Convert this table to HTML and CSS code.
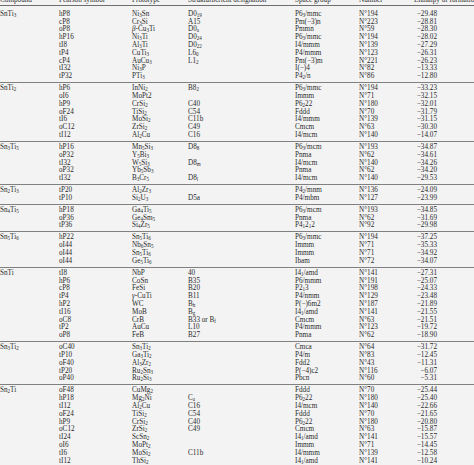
FILE: index.html
```html
<!DOCTYPE html>
<html>
<head>
<meta charset="utf-8">
<link rel="stylesheet" href="styles.css">
</head>
<body>
<div class="page">
<table class="t">
<colgroup>
<col class="c1"><col class="c2"><col class="c3"><col class="c4"><col class="c5"><col class="c6"><col class="c7">
</colgroup>
<thead>
<tr><th>Compound</th><th>Pearson symbol</th><th>Prototype</th><th>Strukturbericht designation</th><th>Space group</th><th>Number</th><th class="eh">Enthalpy of formation</th></tr>
</thead>
<tbody class="g g1">
<tr><td>SnTi<sub>3</sub></td><td>hP8</td><td>Ni<sub>3</sub>Sn</td><td>D0<sub>19</sub></td><td>P6<sub>3</sub>/mmc</td><td>N°194</td><td class="e">−29.48</td></tr>
<tr><td></td><td>cP8</td><td>Cr<sub>3</sub>Si</td><td>A15</td><td>Pm(−3)n</td><td>N°223</td><td class="e">−28.81</td></tr>
<tr><td></td><td>oP8</td><td><i>β</i>-Cu<sub>3</sub>Ti</td><td>D0<sub>a</sub></td><td>Pmmn</td><td>N°59</td><td class="e">−28.30</td></tr>
<tr><td></td><td>hP16</td><td>Ni<sub>3</sub>Ti</td><td>D0<sub>24</sub></td><td>P6<sub>3</sub>/mmc</td><td>N°194</td><td class="e">−28.02</td></tr>
<tr><td></td><td>tI8</td><td>Al<sub>3</sub>Ti</td><td>D0<sub>22</sub></td><td>I4/mmm</td><td>N°139</td><td class="e">−27.29</td></tr>
<tr><td></td><td>tP4</td><td>CuTi<sub>3</sub></td><td>L6<sub>0</sub></td><td>P4/mmm</td><td>N°123</td><td class="e">−26.31</td></tr>
<tr><td></td><td>cP4</td><td>AuCu<sub>3</sub></td><td>L1<sub>2</sub></td><td>Pm(−3)m</td><td>N°221</td><td class="e">−26.23</td></tr>
<tr><td></td><td>tI32</td><td>Ni<sub>3</sub>P</td><td></td><td>I(−)4</td><td>N°82</td><td class="e">−13.33</td></tr>
<tr><td></td><td>tP32</td><td>PTi<sub>3</sub></td><td></td><td>P4<sub>2</sub>/n</td><td>N°86</td><td class="e">−12.80</td></tr>
</tbody>
<tbody class="g">
<tr><td>SnTi<sub>2</sub></td><td>hP6</td><td>InNi<sub>2</sub></td><td>B8<sub>2</sub></td><td>P6<sub>3</sub>/mmc</td><td>N°194</td><td class="e">−33.23</td></tr>
<tr><td></td><td>oI6</td><td>MoPt2</td><td></td><td>Immm</td><td>N°71</td><td class="e">−32.15</td></tr>
<tr><td></td><td>hP9</td><td>CrSi<sub>2</sub></td><td>C40</td><td>P6<sub>2</sub>22</td><td>N°180</td><td class="e">−32.01</td></tr>
<tr><td></td><td>oF24</td><td>TiSi<sub>2</sub></td><td>C54</td><td>Fddd</td><td>N°70</td><td class="e">−31.79</td></tr>
<tr><td></td><td>tI6</td><td>MoSi<sub>2</sub></td><td>C11b</td><td>I4/mmm</td><td>N°139</td><td class="e">−31.15</td></tr>
<tr><td></td><td>oC12</td><td>ZrSi<sub>2</sub></td><td>C49</td><td>Cmcm</td><td>N°63</td><td class="e">−30.30</td></tr>
<tr><td></td><td>tI12</td><td>Al<sub>2</sub>Cu</td><td>C16</td><td>I4/mcm</td><td>N°140</td><td class="e">−14.07</td></tr>
</tbody>
<tbody class="g">
<tr><td>Sn<sub>3</sub>Ti<sub>5</sub></td><td>hP16</td><td>Mn<sub>5</sub>Si<sub>3</sub></td><td>D8<sub>8</sub></td><td>P6<sub>3</sub>/mcm</td><td>N°193</td><td class="e">−34.87</td></tr>
<tr><td></td><td>oP32</td><td>Y<sub>5</sub>Bi<sub>3</sub></td><td></td><td>Pnma</td><td>N°62</td><td class="e">−34.61</td></tr>
<tr><td></td><td>tI32</td><td>W<sub>5</sub>Si<sub>3</sub></td><td>D8<sub>m</sub></td><td>I4/mcm</td><td>N°140</td><td class="e">−34.26</td></tr>
<tr><td></td><td>oP32</td><td>Yb<sub>5</sub>Sb<sub>3</sub></td><td></td><td>Pnma</td><td>N°62</td><td class="e">−34.20</td></tr>
<tr><td></td><td>tI32</td><td>B<sub>3</sub>Cr<sub>5</sub></td><td>D8<sub>l</sub></td><td>I4/mcm</td><td>N°140</td><td class="e">−29.53</td></tr>
</tbody>
<tbody class="g">
<tr><td>Sn<sub>2</sub>Ti<sub>3</sub></td><td>tP20</td><td>Al<sub>2</sub>Zr<sub>3</sub></td><td></td><td>P4<sub>2</sub>/mnm</td><td>N°136</td><td class="e">−24.09</td></tr>
<tr><td></td><td>tP10</td><td>Si<sub>2</sub>U<sub>3</sub></td><td>D5a</td><td>P4/mbm</td><td>N°127</td><td class="e">−23.99</td></tr>
</tbody>
<tbody class="g">
<tr><td>Sn<sub>4</sub>Ti<sub>5</sub></td><td>hP18</td><td>Ga<sub>4</sub>Ti<sub>5</sub></td><td></td><td>P6<sub>3</sub>/mcm</td><td>N°193</td><td class="e">−34.85</td></tr>
<tr><td></td><td>oP36</td><td>Ge<sub>4</sub>Sm<sub>5</sub></td><td></td><td>Pnma</td><td>N°62</td><td class="e">−31.69</td></tr>
<tr><td></td><td>tP36</td><td>Si<sub>4</sub>Zr<sub>5</sub></td><td></td><td>P4<sub>1</sub>2<sub>1</sub>2</td><td>N°92</td><td class="e">−29.98</td></tr>
</tbody>
<tbody class="g">
<tr><td>Sn<sub>5</sub>Ti<sub>6</sub></td><td>hP22</td><td>Sn<sub>5</sub>Ti<sub>6</sub></td><td></td><td>P6<sub>3</sub>/mmc</td><td>N°194</td><td class="e">−37.25</td></tr>
<tr><td></td><td>oI44</td><td>Nb<sub>6</sub>Sn<sub>5</sub></td><td></td><td>Immm</td><td>N°71</td><td class="e">−35.33</td></tr>
<tr><td></td><td>oI44</td><td>Sn<sub>5</sub>Ti<sub>6</sub></td><td></td><td>Immm</td><td>N°71</td><td class="e">−34.92</td></tr>
<tr><td></td><td>oI44</td><td>Ge<sub>5</sub>Ti<sub>6</sub></td><td></td><td>Ibam</td><td>N°72</td><td class="e">−34.07</td></tr>
</tbody>
<tbody class="g">
<tr><td>SnTi</td><td>tI8</td><td>NbP</td><td>40</td><td>I4<sub>1</sub>/amd</td><td>N°141</td><td class="e">−27.31</td></tr>
<tr><td></td><td>hP6</td><td>CoSn</td><td>B35</td><td>P6/mmm</td><td>N°191</td><td class="e">−25.07</td></tr>
<tr><td></td><td>cP8</td><td>FeSi</td><td>B20</td><td>P2<sub>1</sub>3</td><td>N°198</td><td class="e">−24.33</td></tr>
<tr><td></td><td>tP4</td><td><i>γ</i>-CuTi</td><td>B11</td><td>P4/nmm</td><td>N°129</td><td class="e">−23.48</td></tr>
<tr><td></td><td>hP2</td><td>WC</td><td>B<sub>h</sub></td><td>P(−)6m2</td><td>N°187</td><td class="e">−21.89</td></tr>
<tr><td></td><td>tI16</td><td>MoB</td><td>B<sub>g</sub></td><td>I4<sub>1</sub>/amd</td><td>N°141</td><td class="e">−21.55</td></tr>
<tr><td></td><td>oC8</td><td>CrB</td><td>B33 or B<sub>f</sub></td><td>Cmcm</td><td>N°63</td><td class="e">−21.51</td></tr>
<tr><td></td><td>tP2</td><td>AuCu</td><td>L10</td><td>P4/mmm</td><td>N°123</td><td class="e">−19.72</td></tr>
<tr><td></td><td>oP8</td><td>FeB</td><td>B27</td><td>Pnma</td><td>N°62</td><td class="e">−18.90</td></tr>
</tbody>
<tbody class="g">
<tr><td>Sn<sub>3</sub>Ti<sub>2</sub></td><td>oC40</td><td>Sn<sub>3</sub>Ti<sub>2</sub></td><td></td><td>Cmca</td><td>N°64</td><td class="e">−31.72</td></tr>
<tr><td></td><td>tP10</td><td>Ga<sub>3</sub>Ti<sub>2</sub></td><td></td><td>P4/m</td><td>N°83</td><td class="e">−12.45</td></tr>
<tr><td></td><td>oF40</td><td>Al<sub>3</sub>Zr<sub>2</sub></td><td></td><td>Fdd2</td><td>N°43</td><td class="e">−11.31</td></tr>
<tr><td></td><td>tP20</td><td>Ru<sub>2</sub>Sn<sub>3</sub></td><td></td><td>P(−4)c2</td><td>N°116</td><td class="e">−6.07</td></tr>
<tr><td></td><td>oP40</td><td>Ru<sub>2</sub>Si<sub>3</sub></td><td></td><td>Pbcn</td><td>N°60</td><td class="e">−5.31</td></tr>
</tbody>
<tbody class="g">
<tr><td>Sn<sub>2</sub>Ti</td><td>oF48</td><td>CuMg<sub>2</sub></td><td></td><td>Fddd</td><td>N°70</td><td class="e">−25.44</td></tr>
<tr><td></td><td>hP18</td><td>Mg<sub>2</sub>Ni</td><td>C<sub>a</sub></td><td>P6<sub>2</sub>22</td><td>N°180</td><td class="e">−25.40</td></tr>
<tr><td></td><td>tI12</td><td>Al<sub>2</sub>Cu</td><td>C16</td><td>I4/mcm</td><td>N°140</td><td class="e">−22.66</td></tr>
<tr><td></td><td>oF24</td><td>TiSi<sub>2</sub></td><td>C54</td><td>Fddd</td><td>N°70</td><td class="e">−21.65</td></tr>
<tr><td></td><td>hP9</td><td>CrSi<sub>2</sub></td><td>C40</td><td>P6<sub>2</sub>22</td><td>N°180</td><td class="e">−20.80</td></tr>
<tr><td></td><td>oC12</td><td>ZrSi<sub>2</sub></td><td>C49</td><td>Cmcm</td><td>N°63</td><td class="e">−15.87</td></tr>
<tr><td></td><td>tI24</td><td>ScSn<sub>2</sub></td><td></td><td>I4<sub>1</sub>/amd</td><td>N°141</td><td class="e">−15.57</td></tr>
<tr><td></td><td>oI6</td><td>MoPt<sub>2</sub></td><td></td><td>Immm</td><td>N°71</td><td class="e">−14.45</td></tr>
<tr><td></td><td>tI6</td><td>MoSi<sub>2</sub></td><td>C11b</td><td>I4/mmm</td><td>N°139</td><td class="e">−12.58</td></tr>
<tr><td></td><td>tI12</td><td>ThSi<sub>2</sub></td><td></td><td>I4<sub>1</sub>/amd</td><td>N°141</td><td class="e">−10.24</td></tr>
</tbody>
</table>
</div>
</body>
</html>
```
FILE: styles.css
```css
html, body {
  margin: 0;
  padding: 0;
  background: #f3f3f3;
}
.page {
  width: 474px;
  height: 465px;
  overflow: hidden;
}
.t {
  border-collapse: collapse;
  table-layout: fixed;
  width: 540px;
  margin-top: -3px;
  font-family: "Liberation Serif", "Times New Roman", serif;
  font-size: 7.2px;
  color: #2a2a2a;
}
.c1 { width: 59px; }
.c2 { width: 73px; }
.c3 { width: 56px; }
.c4 { width: 107px; }
.c5 { width: 64px; }
.c6 { width: 55px; }
.c7 { width: 126px; }
th, td {
  padding: 0;
  line-height: 7.8px;
  text-align: left;
  white-space: nowrap;
  font-weight: normal;
  overflow: visible;
}
thead th {
  border-bottom: 1px solid #6e6e6e;
}
.g {
  border-top: 1px solid #808080;
}
.g tr:first-child td { padding-top: 2px; }
.g tr:last-child td { padding-bottom: 1.2px; }
.g1 tr:first-child td { padding-top: 5px; }
td.e {
  text-align: right;
  padding-right: 103px;
}
sub {
  font-size: 70%;
  line-height: 0;
  vertical-align: -0.25em;
}
i { font-style: italic; }
```
